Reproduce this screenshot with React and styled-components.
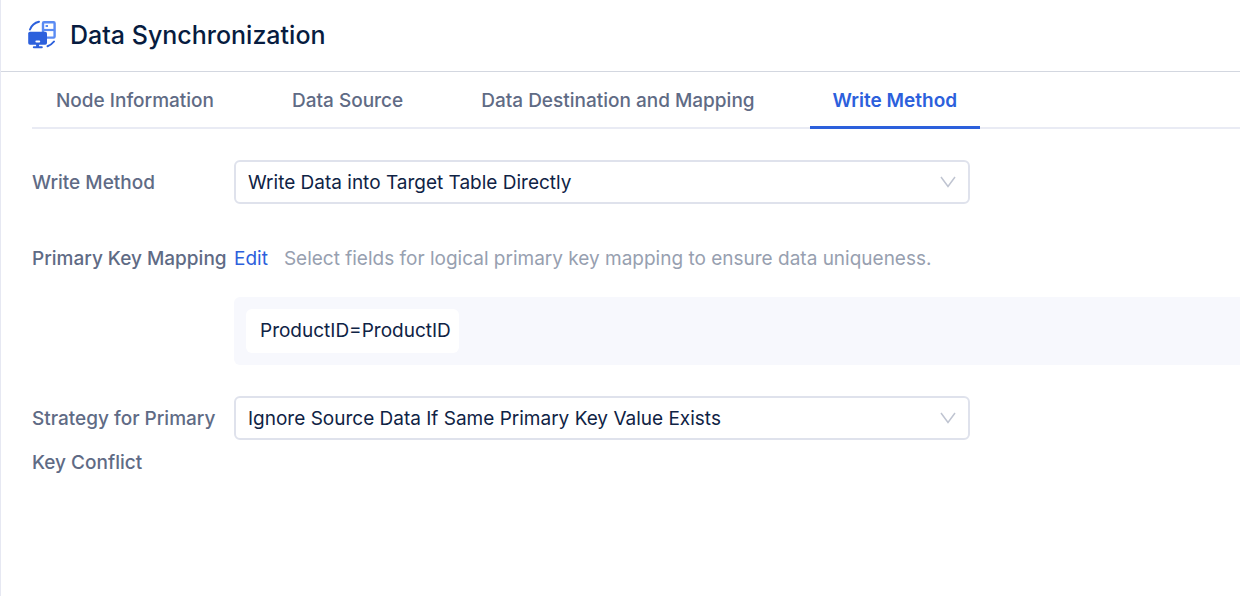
import React, { useState } from "react";
import styled, { createGlobalStyle } from "styled-components";

const GlobalStyle = createGlobalStyle`
  * {
    box-sizing: border-box;
  }

  body {
    margin: 0;
    background-color: white;
    color: #0f2345;
    font-family: Inter, "Liberation Sans", sans-serif;
    font-size: 19px;
    line-height: 44px;
  }
`;

const Container = styled.div`
  min-height: 100vh;
  border-left: 1px solid #e6e8f2;
`;

const Header = styled.header`
  display: flex;
  align-items: center;
  gap: 14px;
  height: 72px;
  padding: 0 26px 2px;
  border-bottom: 1px solid #d3d7e0;
`;

const Title = styled.h1`
  margin: 0;
  color: #071c40;
  font-size: 25px;
  font-weight: 500;
`;

const Tabs = styled.div`
  display: flex;
  gap: 32px;
  height: 57px;
  margin-left: 31px;
  padding-left: 1px;
  box-shadow: inset 0 -2px #e9ebf4;
`;

const Tab = styled.button`
  padding: 3px 23px 0;
  border: none;
  border-bottom: 3px solid ${(props) => (props.$active ? "#2c60dc" : "transparent")};
  background: none;
  color: ${(props) => (props.$active ? "#2c60dc" : "#5f6b85")};
  font-family: inherit;
  font-size: 19px;
  font-weight: ${(props) => (props.$active ? 600 : 500)};
  white-space: nowrap;
  cursor: pointer;
`;

const Form = styled.form`
  display: flex;
  flex-direction: column;
  gap: 31px;
  padding: 31px 0 31px 31px;
`;

const Row = styled.div`
  display: grid;
  grid-template-columns: 202px minmax(0, 1fr);
`;

const Label = styled.label`
  padding-top: 1px;
  color: #5f6b85;
  font-weight: 500;
`;

const SelectBox = styled.div`
  position: relative;
  max-width: 736px;
  height: 44px;
`;

const Select = styled.select`
  width: 100%;
  height: 100%;
  padding: 0 48px 0 12px;
  border: 2px solid #dfe2ec;
  border-radius: 6px;
  appearance: none;
  background-color: white;
  color: inherit;
  font-family: inherit;
  font-size: 19px;
`;

const Arrow = styled.svg`
  position: absolute;
  top: 15px;
  right: 14px;
  pointer-events: none;
`;

const Hint = styled.div`
  display: flex;
  gap: 16px;
  padding-top: 1px;
  color: #97a0b0;
`;

const Edit = styled.a`
  color: #2c60dc;
  text-decoration: none;
`;

const Keys = styled.div`
  display: flex;
  margin-top: 16px;
  padding: 12px;
  border-radius: 6px 0 0 6px;
  background-color: #f7f8fd;
`;

const Key = styled.span`
  padding: 0 8px 0 14px;
  border-radius: 6px;
  background-color: white;
`;

const tabs = [
  "Node Information",
  "Data Source",
  "Data Destination and Mapping",
  "Write Method",
];

function SyncIcon() {
  return (
    <svg width="29" height="29" viewBox="0 0 29 29" fill="none" aria-hidden="true">
      <path d="M3 9.5C4.5 5.5 7.5 2.8 12 1.8" stroke="#2c60dc" strokeWidth="2" strokeLinecap="round" />
      <path d="M20.5 26.2C23.2 25.2 25.2 23.8 27 21.5" stroke="#2c60dc" strokeWidth="2" strokeLinecap="round" />
      <rect x="16" y="2.2" width="11.6" height="15.4" rx="1" stroke="#5a8bf3" strokeWidth="2.4" />
      <path d="M16 10h12" stroke="#5a8bf3" strokeWidth="2.2" />
      <path d="M18.6 6h2.4" stroke="#5a8bf3" strokeWidth="2" />
      <rect x="1.2" y="11.8" width="18.8" height="13" rx="1.8" fill="#2c60dc" />
      <path d="M10.6 24v3" stroke="#2c60dc" strokeWidth="3" />
      <path d="M6.8 27.2h8" stroke="#2c60dc" strokeWidth="2" strokeLinecap="round" />
      <path d="M9.4 21.4h2.8" stroke="white" strokeWidth="2" strokeLinecap="round" />
    </svg>
  );
}

function Dropdown({ id, options }) {
  return (
    <SelectBox>
      <Select id={id}>
        {options.map((option) => (
          <option key={option}>{option}</option>
        ))}
      </Select>
      <Arrow width="16" height="14" viewBox="0 0 16 14" fill="none">
        <path d="M1 2L8 11.5L15 2" stroke="#bfc4d1" strokeWidth="1.5" />
      </Arrow>
    </SelectBox>
  );
}

function App() {
  const [active, setActive] = useState("Write Method");

  return (
    <Container>
      <GlobalStyle />
      <Header>
        <SyncIcon />
        <Title>Data Synchronization</Title>
      </Header>
      <Tabs role="tablist">
        {tabs.map((tab) => (
          <Tab
            key={tab}
            type="button"
            role="tab"
            aria-selected={tab === active}
            $active={tab === active}
            onClick={() => setActive(tab)}
          >
            {tab}
          </Tab>
        ))}
      </Tabs>
      <Form>
        <Row>
          <Label htmlFor="method">Write Method</Label>
          <Dropdown id="method" options={["Write Data into Target Table Directly"]} />
        </Row>
        <Row>
          <Label as="span">Primary Key Mapping</Label>
          <div>
            <Hint>
              <Edit href="#edit">Edit</Edit>
              <span>Select fields for logical primary key mapping to ensure data uniqueness.</span>
            </Hint>
            <Keys>
              <Key>ProductID=ProductID</Key>
            </Keys>
          </div>
        </Row>
        <Row>
          <Label htmlFor="strategy">Strategy for Primary Key Conflict</Label>
          <Dropdown
            id="strategy"
            options={["Ignore Source Data If Same Primary Key Value Exists"]}
          />
        </Row>
      </Form>
    </Container>
  );
}

export default App;
